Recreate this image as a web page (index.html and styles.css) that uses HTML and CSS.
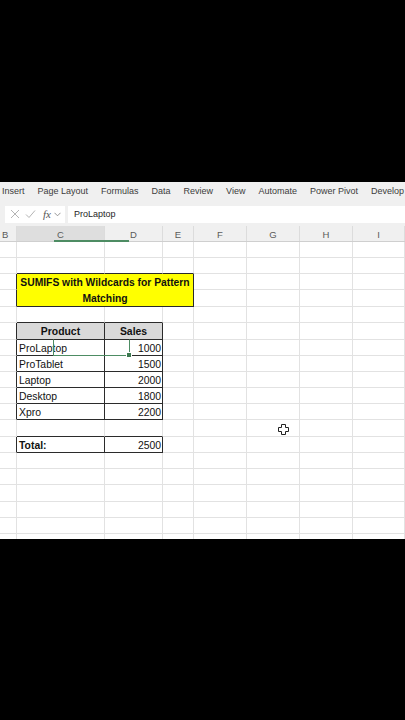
FILE: index.html
```html
<!DOCTYPE html>
<html>
<head>
<meta charset="utf-8">
<link rel="stylesheet" href="styles.css">
</head>
<body>
<div class="black-top"></div>
<div class="excel">
  <div class="tabs">
    <span>Insert</span><span>Page Layout</span><span>Formulas</span><span>Data</span><span>Review</span><span>View</span><span>Automate</span><span>Power Pivot</span><span>Develop</span>
  </div>
  <div class="fbar">
    <div class="fbtns">
      <svg class="ic" width="10" height="10" viewBox="0 0 10 10"><path d="M1 1L9 9M9 1L1 9" stroke="#b4b4b4" stroke-width="1" fill="none"/></svg>
      <svg class="ic" width="11" height="10" viewBox="0 0 11 10"><path d="M1 5.5L4 8.5L10 1.5" stroke="#b4b4b4" stroke-width="1" fill="none"/></svg>
      <span class="fx">fx</span>
      <svg class="ic" width="7" height="5" viewBox="0 0 7 5"><path d="M0.5 0.8L3.5 3.8L6.5 0.8" stroke="#8a8a8a" stroke-width="0.9" fill="none"/></svg>
    </div>
    <div class="finput">ProLaptop</div>
  </div>
  <div class="colhdr">
    <div class="h hb">B</div><div class="h hsel">C</div><div class="h">D</div><div class="h">E</div><div class="h">F</div><div class="h">G</div><div class="h">H</div><div class="h">I</div>
    <div class="hline"></div>
  </div>
  <div class="sheet">
    <!-- row 1 -->
    <div class="c"></div><div class="c"></div><div class="c"></div><div class="c"></div><div class="c"></div><div class="c"></div><div class="c"></div><div class="c"></div>
    <!-- row 2 -->
    <div class="c"></div><div class="c bb"></div><div class="c bb"></div><div class="c bb"></div><div class="c"></div><div class="c"></div><div class="c"></div><div class="c"></div>
    <!-- row 3-4 -->
    <div class="c br"></div><div class="c title">SUMIFS with Wildcards for Pattern<br>Matching</div><div class="c"></div><div class="c"></div><div class="c"></div><div class="c"></div>
    <div class="c br"></div><div class="c"></div><div class="c"></div><div class="c"></div><div class="c"></div>
    <!-- row 5 -->
    <div class="c"></div><div class="c bb"></div><div class="c bb"></div><div class="c"></div><div class="c"></div><div class="c"></div><div class="c"></div><div class="c"></div>
    <!-- row 6 -->
    <div class="c br"></div><div class="c dk hd">Product</div><div class="c dk hd">Sales</div><div class="c"></div><div class="c"></div><div class="c"></div><div class="c"></div><div class="c"></div>
    <!-- row 7 -->
    <div class="c br"></div><div class="c dk txt">ProLaptop</div><div class="c dk num">1000</div><div class="c"></div><div class="c"></div><div class="c"></div><div class="c"></div><div class="c"></div>
    <!-- row 8 -->
    <div class="c br"></div><div class="c dk txt">ProTablet</div><div class="c dk num">1500</div><div class="c"></div><div class="c"></div><div class="c"></div><div class="c"></div><div class="c"></div>
    <!-- row 9 -->
    <div class="c br"></div><div class="c dk txt">Laptop</div><div class="c dk num">2000</div><div class="c"></div><div class="c"></div><div class="c"></div><div class="c"></div><div class="c"></div>
    <!-- row 10 -->
    <div class="c br"></div><div class="c dk txt">Desktop</div><div class="c dk num">1800</div><div class="c"></div><div class="c"></div><div class="c"></div><div class="c"></div><div class="c"></div>
    <!-- row 11 -->
    <div class="c br"></div><div class="c dk txt">Xpro</div><div class="c dk num">2200</div><div class="c"></div><div class="c"></div><div class="c"></div><div class="c"></div><div class="c"></div>
    <!-- row 12 -->
    <div class="c"></div><div class="c bb"></div><div class="c bb"></div><div class="c"></div><div class="c"></div><div class="c"></div><div class="c"></div><div class="c"></div>
    <!-- row 13 -->
    <div class="c br"></div><div class="c dk txt bold">Total:</div><div class="c dk num">2500</div><div class="c"></div><div class="c"></div><div class="c"></div><div class="c"></div><div class="c"></div>
    <!-- row 14 -->
    <div class="c"></div><div class="c"></div><div class="c"></div><div class="c"></div><div class="c"></div><div class="c"></div><div class="c"></div><div class="c"></div>
    <!-- row 15 -->
    <div class="c"></div><div class="c"></div><div class="c"></div><div class="c"></div><div class="c"></div><div class="c"></div><div class="c"></div><div class="c"></div>
    <!-- row 16 -->
    <div class="c"></div><div class="c"></div><div class="c"></div><div class="c"></div><div class="c"></div><div class="c"></div><div class="c"></div><div class="c"></div>
    <!-- row 17 -->
    <div class="c"></div><div class="c"></div><div class="c"></div><div class="c"></div><div class="c"></div><div class="c"></div><div class="c"></div><div class="c"></div>
    <!-- row 18 -->
    <div class="c"></div><div class="c"></div><div class="c"></div><div class="c"></div><div class="c"></div><div class="c"></div><div class="c"></div><div class="c"></div>
    <!-- row 19 -->
    <div class="c"></div><div class="c"></div><div class="c"></div><div class="c"></div><div class="c"></div><div class="c"></div><div class="c"></div><div class="c"></div>

    <div class="selection"><span class="handle"></span></div>
    <svg class="cursor" width="11" height="11" viewBox="0 0 11 11"><path d="M3.5 0.5H7.5V3.5H10.5V7.5H7.5V10.5H3.5V7.5H0.5V3.5H3.5Z" fill="#fff" stroke="#222" stroke-width="1"/></svg>
  </div>
</div>
<div class="black-bottom"></div>
</body>
</html>
```
FILE: styles.css
```css
html, body {
  margin: 0;
  padding: 0;
  background: #000;
}
body {
  width: 405px;
  height: 720px;
  overflow: hidden;
  font-family: "Liberation Sans", Arial, sans-serif;
}
.black-top {
  height: 182px;
}
.excel {
  height: 357px;
  background: #fff;
  overflow: hidden;
}
.tabs {
  height: 21px;
  background: #f0f0f0;
  display: flex;
  align-items: center;
  gap: 13px;
  padding: 0 0 3px 2px;
  box-sizing: border-box;
  font-size: 9px;
  color: #3c3c3c;
  white-space: nowrap;
  overflow: hidden;
}
.fbar {
  height: 23px;
  background: #f0f0f0;
  display: flex;
  align-items: center;
  gap: 3px;
  padding: 0 0 1px 5px;
  box-sizing: border-box;
}
.fbtns {
  width: 60px;
  height: 17px;
  background: #fff;
  display: flex;
  align-items: center;
  padding-left: 5px;
  box-sizing: border-box;
  gap: 0;
}
.fbtns .ic:nth-child(1) { margin-right: 5px; }
.fbtns .ic:nth-child(2) { margin-right: 7px; }
.fx {
  font-family: "Liberation Serif", "Times New Roman", serif;
  font-style: italic;
  font-size: 11px;
  color: #555;
  margin-right: 3px;
  line-height: 1;
}
.finput {
  flex: 1;
  height: 17px;
  background: #fff;
  display: flex;
  align-items: center;
  padding-left: 6px;
  font-size: 9px;
  color: #262626;
}
.colhdr {
  position: relative;
  height: 16px;
  display: grid;
  grid-template-columns: 17px 88px 58px 31px 53px 53px 53px 52px;
  background: #f0f0f0;
  border-bottom: 1px solid #cfcfcf;
  box-sizing: border-box;
}
.h {
  border-right: 1px solid #dcdcdc;
  font-size: 9.5px;
  color: #5a5a5a;
  display: flex;
  align-items: center;
  justify-content: center;
  padding-top: 1px;
}
.hb {
  justify-content: flex-start;
  padding-left: 2px;
}
.hsel {
  background: #dedede;
}
.hline {
  position: absolute;
  left: 54px;
  width: 75px;
  bottom: -1px;
  height: 2px;
  background: #4d8c63;
}
.sheet {
  position: relative;
  display: grid;
  grid-template-columns: 17px 88px 58px 31px 53px 53px 53px 52px;
  grid-template-rows: 16px 16px 16px 17px 16px 17px 16px 16px 16px 16px 16px 17px 16px 16px 16px 17px 16px 16px 16px;
  font-size: 10.4px;
  color: #111;
}
.c {
  border-right: 1px solid #e2e2e2;
  border-bottom: 1px solid #e2e2e2;
  box-sizing: border-box;
  min-width: 0;
  white-space: nowrap;
  overflow: hidden;
  display: flex;
  align-items: center;
  padding-top: 1px;
}
.bb { border-bottom-color: #2b2b2b; }
.br { border-right-color: #2b2b2b; }
.dk {
  border-right-color: #2b2b2b;
  border-bottom-color: #2b2b2b;
}
.title {
  grid-column: span 3;
  grid-row: span 2;
  background: #ffff00;
  border-right-color: #2b2b2b;
  border-bottom-color: #2b2b2b;
  font-weight: bold;
  font-size: 10.3px;
  line-height: 16px;
  text-align: center;
  justify-content: center;
  white-space: normal;
  padding-top: 2px;
}
.hd {
  background: #d9d9d9;
  font-weight: bold;
  justify-content: center;
}
.txt {
  padding-left: 2px;
}
.num {
  justify-content: flex-end;
  padding-right: 1px;
}
.bold { font-weight: bold; }
.selection {
  position: absolute;
  left: 53px;
  top: 97px;
  width: 77px;
  height: 17px;
  border: 1px solid #4d8c63;
  border-top-color: transparent;
  box-sizing: border-box;
}
.handle {
  position: absolute;
  right: -3px;
  bottom: -3px;
  width: 4px;
  height: 4px;
  background: #3d7a52;
  border: 1px solid #fff;
  box-sizing: content-box;
}
.cursor {
  position: absolute;
  left: 278px;
  top: 182px;
}
.black-bottom {
  height: 181px;
}
```
